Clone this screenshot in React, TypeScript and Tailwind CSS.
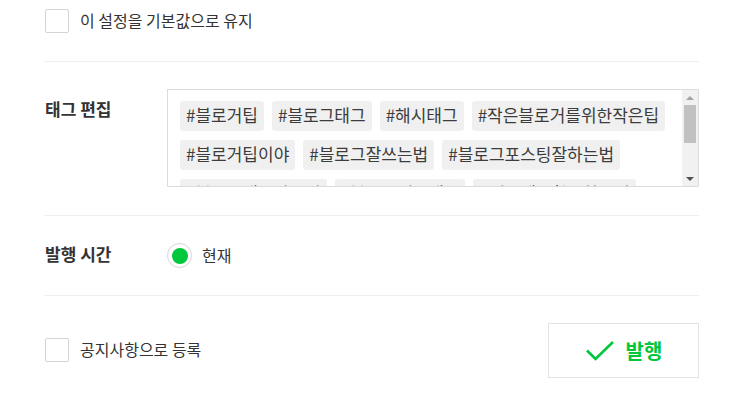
import React from 'react';

const tags = [
  '#블로거팁',
  '#블로그태그',
  '#해시태그',
  '#작은블로거를위한작은팁',
  '#블로거팁이야',
  '#블로그잘쓰는법',
  '#블로그포스팅잘하는법',
  '#블로그태그다는법',
  '#블로그해시태그',
  '#해시태그활용하는법',
];

const Checkbox = () => (
  <span className="block h-[24px] w-[24px] rounded-[2px] border border-[#d4d4d4] bg-white" />
);

const Scrollbar = () => (
  <div className="flex w-[16px] shrink-0 flex-col bg-[#f1f1f1]">
    <div className="flex h-[15px] items-center justify-center">
      <span className="h-0 w-0 border-x-[4px] border-b-[4px] border-x-transparent border-b-[#a3a3a3]" />
    </div>
    <div className="mx-[2px] h-[38px] bg-[#c1c1c1]" />
    <div className="flex-1" />
    <div className="flex h-[15px] items-center justify-center">
      <span className="h-0 w-0 border-x-[4px] border-t-[4px] border-x-transparent border-t-[#505050]" />
    </div>
  </div>
);

export default function App() {
  return (
    <div className="min-h-screen w-full bg-white text-[#333] [font-family:'Noto_Sans_CJK_KR','Noto_Sans',sans-serif]">
      <div className="ml-[44px] w-[655px]">
        {/* keep default */}
        <div className="flex h-[61px] items-start gap-[11px] pt-[9px] pl-px">
          <Checkbox />
          <span className="text-[16px] leading-[23px]">이 설정을 기본값으로 유지</span>
        </div>

        <div className="border-t border-[#efefef]" />

        {/* tags */}
        <div className="flex pt-[27px] pb-[28px]">
          <div className="w-[123px] shrink-0 pt-[8px] pl-px text-[17px] font-bold leading-[24px]">
            태그 편집
          </div>
          <div className="flex h-[98px] flex-1 overflow-hidden border border-[#dcdcdc]">
            <div className="flex flex-1 flex-wrap content-start gap-x-[8px] gap-y-[9px] overflow-hidden pt-[11px] pl-[12px]">
              {tags.map((t) => (
                <span
                  key={t}
                  className="rounded-[3px] bg-[#f0f0f0] px-[6px] pb-[2px] text-[17px] leading-[28px] whitespace-nowrap text-[#3c3c3c]"
                >
                  {t}
                </span>
              ))}
            </div>
            <Scrollbar />
          </div>
        </div>

        <div className="border-t border-[#efefef]" />

        {/* publish time */}
        <div className="flex h-[79px] items-center">
          <div className="w-[123px] shrink-0 pb-[4px] pl-px text-[17px] font-bold leading-[24px]">발행 시간</div>
          <span className="flex h-[25px] w-[25px] items-center justify-center rounded-full border border-[#d6d6d6] bg-white">
            <span className="block h-[16px] w-[16px] rounded-full bg-[#00c73c]" />
          </span>
          <span className="ml-[10px] pb-[2px] text-[16px] leading-[24px]">현재</span>
        </div>

        <div className="border-t border-[#efefef]" />

        {/* bottom */}
        <div className="flex items-start justify-between pt-[27px]">
          <div className="flex items-center gap-[11px] pt-[14px] pl-px">
            <Checkbox />
            <span className="pb-[1px] text-[16px] leading-[24px]">공지사항으로 등록</span>
          </div>
          <button className="flex h-[55px] w-[151px] items-center justify-center gap-[11px] border border-[#e3e3e3] bg-white">
            <svg width="30" height="22" viewBox="0 0 30 22" fill="none">
              <path d="M2 10.5 L10.5 19 L28 2" stroke="#00c73c" strokeWidth="2.6" />
            </svg>
            <span className="text-[20px] font-bold leading-[24px] text-[#00c73c]">발행</span>
          </button>
        </div>
      </div>
    </div>
  );
}
